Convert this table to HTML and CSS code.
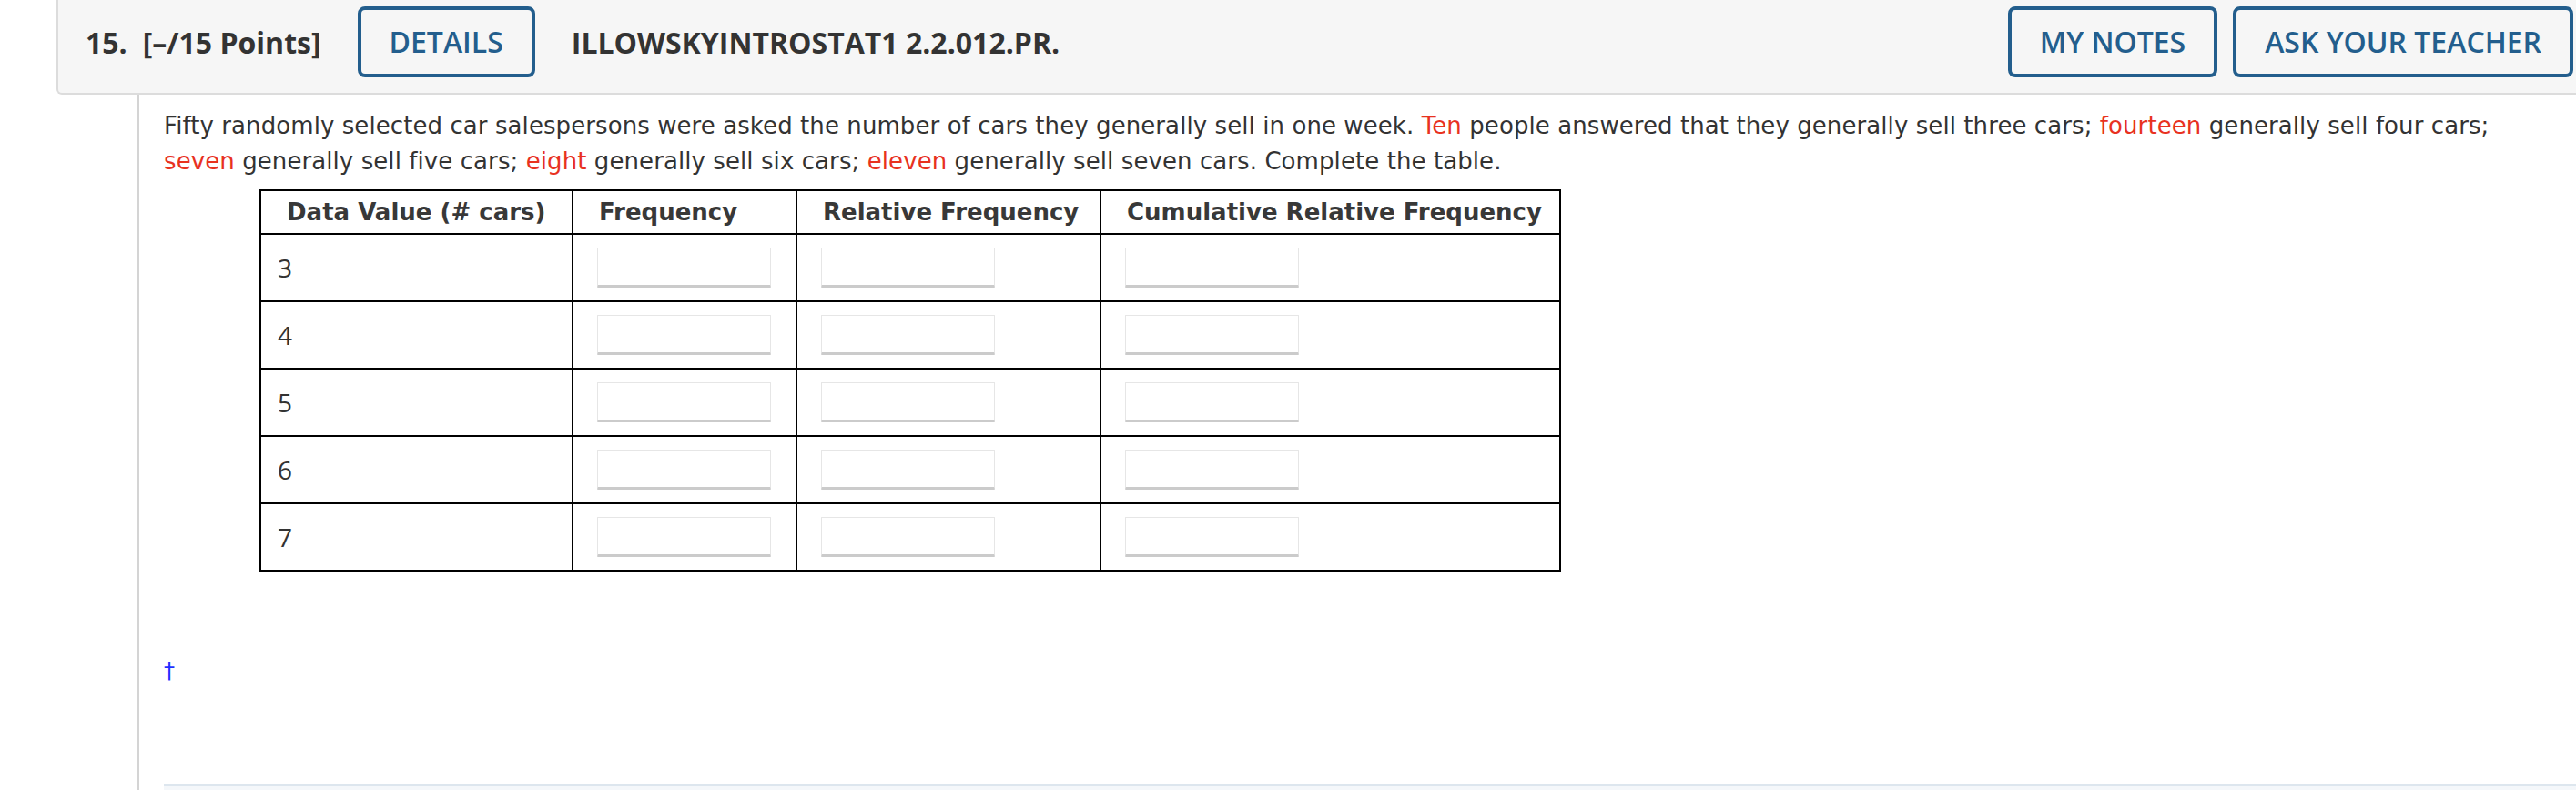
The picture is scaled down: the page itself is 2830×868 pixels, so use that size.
FILE: index.html
```html
<!DOCTYPE html>
<html lang="en">
<head>
<meta charset="utf-8">
<title>Question 15</title>
<link rel="stylesheet" href="styles.css">
</head>
<body>
<div class="question-header">
  <span class="qnum">15.</span>
  <span class="points">[–/15 Points]</span>
  <button class="btn">DETAILS</button>
  <span class="qtitle">ILLOWSKYINTROSTAT1 2.2.012.PR.</span>
  <span class="spacer"></span>
  <div class="actions">
    <button class="btn">MY NOTES</button>
    <button class="btn">ASK YOUR TEACHER</button>
  </div>
</div>
<div class="question-body">
  <p class="prompt">Fifty randomly selected car salespersons were asked the number of cars they generally sell in one week. <span class="hl">Ten</span> people answered that they generally sell three cars; <span class="hl">fourteen</span> generally sell four cars; <span class="hl">seven</span> generally sell five cars; <span class="hl">eight</span> generally sell six cars; <span class="hl">eleven</span> generally sell seven cars. Complete the table.</p>
  <table class="freq">
    <colgroup>
      <col class="c1"><col class="c2"><col class="c3"><col class="c4">
    </colgroup>
    <thead>
      <tr><th>Data Value (# cars)</th><th>Frequency</th><th>Relative Frequency</th><th>Cumulative Relative Frequency</th></tr>
    </thead>
    <tbody>
      <tr><td class="val">3</td><td class="inp"><input type="text"></td><td class="inp"><input type="text"></td><td class="inp"><input type="text"></td></tr>
      <tr><td class="val">4</td><td class="inp"><input type="text"></td><td class="inp"><input type="text"></td><td class="inp"><input type="text"></td></tr>
      <tr><td class="val">5</td><td class="inp"><input type="text"></td><td class="inp"><input type="text"></td><td class="inp"><input type="text"></td></tr>
      <tr><td class="val">6</td><td class="inp"><input type="text"></td><td class="inp"><input type="text"></td><td class="inp"><input type="text"></td></tr>
      <tr><td class="val">7</td><td class="inp"><input type="text"></td><td class="inp"><input type="text"></td><td class="inp"><input type="text"></td></tr>
    </tbody>
  </table>
  <div class="dagger">†</div>
  <div class="next-section"></div>
</div>
</body>
</html>
```
FILE: styles.css
```css
html, body {
  margin: 0;
  padding: 0;
  background: #ffffff;
  overflow: hidden;
}

body {
  width: 2830px;
  height: 868px;
}

.question-header {
  margin-left: 62px;
  height: 78px;
  padding: 7px 3px 17px 30px;
  display: flex;
  align-items: center;
  background: #f6f6f6;
  border-left: 2px solid #dcdcdc;
  border-bottom: 2px solid #dcdcdc;
  border-bottom-left-radius: 6px;
  font-family: "Open Sans", "Liberation Sans", sans-serif;
  font-size: 32px;
  color: #333333;
}

.qnum {
  font-weight: 700;
  margin-right: 17px;
}

.points {
  font-weight: 700;
  margin-right: 40px;
}

.qtitle {
  font-weight: 700;
  margin-left: 40px;
}

.spacer {
  flex: 1;
}

.actions {
  display: flex;
  gap: 17px;
}

.btn {
  box-sizing: border-box;
  height: 78px;
  padding: 0 31px;
  background: transparent;
  border: 4px solid #235e8d;
  border-radius: 8px;
  color: #235e8d;
  font-family: "Open Sans", "Liberation Sans", sans-serif;
  font-size: 32px;
  font-weight: 600;
  line-height: 1;
}

.question-body {
  margin-left: 151px;
  height: 749px;
  padding: 15px 0 0 27px;
  border-left: 2px solid #d4d4d4;
  overflow: hidden;
}

.prompt {
  margin: 0;
  padding-right: 40px;
  font-family: "DejaVu Sans", Verdana, sans-serif;
  font-size: 26px;
  line-height: 39px;
  letter-spacing: 0.08px;
  color: #333333;
}

.hl {
  color: #e8321f;
}

.freq {
  margin: 11px 0 0 105px;
  width: 1428px;
  table-layout: fixed;
  border-collapse: collapse;
  border: 2px solid #000000;
}

.c1 { width: 343px; }
.c2 { width: 246px; }
.c3 { width: 334px; }
.c4 { width: 505px; }

.freq th {
  border: 2px solid #000000;
  padding: 0 26px 0 28px;
  height: 46px;
  text-align: left;
  font-family: "DejaVu Sans", Verdana, sans-serif;
  font-size: 26px;
  font-weight: 700;
  color: #383838;
  white-space: nowrap;
}

.freq td {
  border: 2px solid #000000;
  height: 72px;
  vertical-align: middle;
}

.freq td.val {
  padding: 0 18px;
  font-family: "Open Sans", "DejaVu Sans", sans-serif;
  font-size: 28px;
  color: #333333;
}

.freq td.inp {
  padding: 0 26px;
}

.freq input {
  display: block;
  box-sizing: border-box;
  width: 191px;
  height: 44px;
  margin: 0;
  padding: 0 8px;
  background: #ffffff;
  border: 1px solid #e6e6e6;
  border-bottom: 3px solid #cbcbcb;
  border-radius: 1px;
  font-size: 24px;
}

.dagger {
  margin-top: 96px;
  font-family: "DejaVu Sans", sans-serif;
  font-size: 24px;
  line-height: 26px;
  color: #1f2fff;
}

.next-section {
  margin-top: 111px;
  height: 20px;
  border-top: 3px solid #dde6ee;
  background: #f4f7fa;
}
```
